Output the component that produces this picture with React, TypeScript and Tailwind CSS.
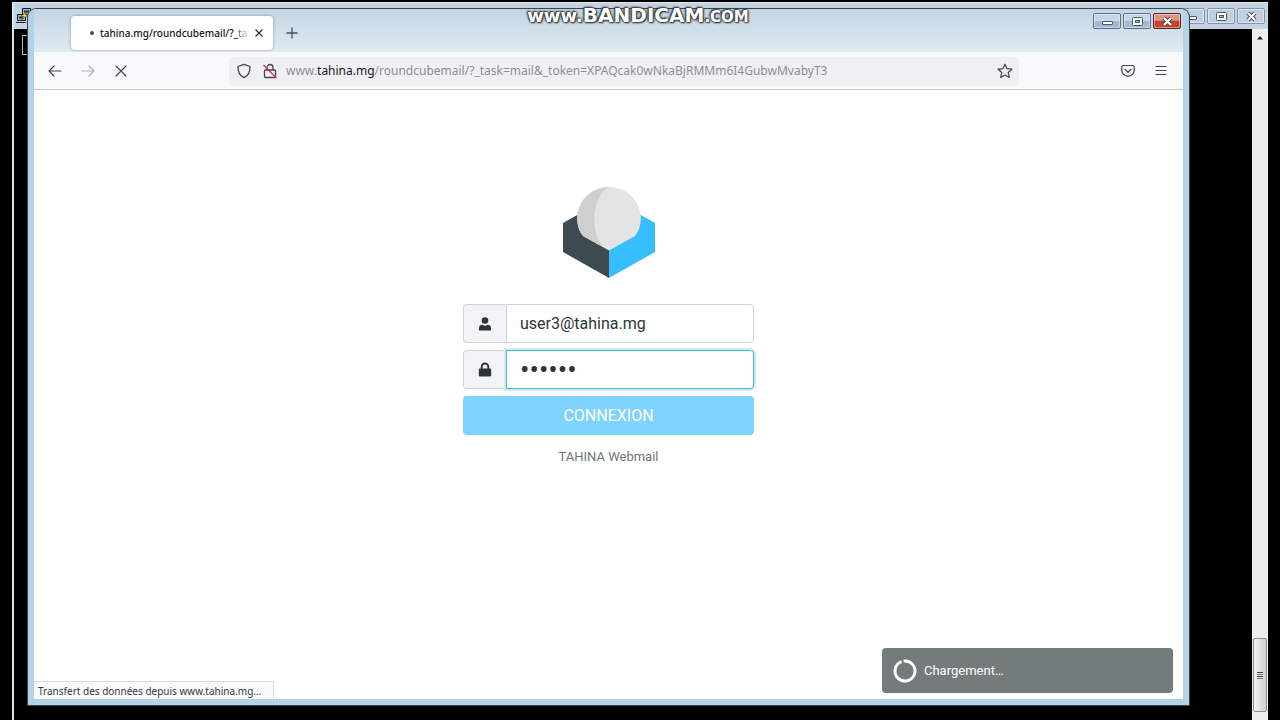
import { useState } from 'react';
import type { ReactNode } from 'react';

function CaptionGlyph({ kind }: { kind: 'min' | 'max' | 'close' }) {
  return (
    <svg width="13" height="11" viewBox="0 0 13 11" fill="none" aria-hidden="true">
      {kind === 'min' && <rect x="1.5" y="5.5" width="10" height="3" rx="0.5" fill="#fff" stroke="#4b5a6b" />}
      {kind === 'max' && (
        <>
          <rect x="1.5" y="1.5" width="10" height="8" rx="1" fill="#fff" stroke="#4b5a6b" />
          <rect x="4.5" y="4.5" width="4" height="2" fill="#9db4cc" stroke="#4b5a6b" />
        </>
      )}
      {kind === 'close' && (
        <>
          <path d="M3 2l7 7M10 2L3 9" stroke="#4b4650" strokeWidth="4" />
          <path d="M3 2l7 7M10 2L3 9" stroke="#fff" strokeWidth="2.2" />
        </>
      )}
    </svg>
  );
}

function CaptionButtons({ active }: { active: boolean }) {
  const base = 'flex h-4 w-7 items-center justify-center rounded-xs border shadow-[inset_0_0_0_1px_rgba(255,255,255,0.45)]';
  const plain = active
    ? 'border-[#596f88] bg-linear-to-b from-[#c5d7e9] from-50% to-[#a2bbd4] to-50%'
    : 'border-[#8095ad] bg-[#bfd0e3]';
  const close = active
    ? 'border-[#57202a] bg-linear-to-b from-[#dc9586] from-45% to-[#c5432b] to-50%'
    : plain;

  return (
    <div className="flex gap-0.5">
      <button type="button" aria-label="Réduire" className={`${base} ${plain}`}><CaptionGlyph kind="min" /></button>
      <button type="button" aria-label="Agrandir" className={`${base} ${plain}`}><CaptionGlyph kind="max" /></button>
      <button type="button" aria-label="Fermer" className={`${base} ${close}`}><CaptionGlyph kind="close" /></button>
    </div>
  );
}

function ToolButton({ label, className = '', children }: { label: string; className?: string; children: ReactNode }) {
  return (
    <button type="button" aria-label={label} className={`flex h-8 w-[33px] shrink-0 items-center justify-center text-[#45444f] ${className}`}>
      <svg width="16" height="16" viewBox="0 0 16 16" fill="none" stroke="currentColor" strokeWidth="1.2" strokeLinecap="round" strokeLinejoin="round">
        {children}
      </svg>
    </button>
  );
}

function Terminal() {
  return (
    <div className="absolute top-0.5 right-3 bottom-0 left-3 flex flex-col border-t border-l-2 border-[#dfe6ee]">
      <div className="flex h-[26px] shrink-0 items-center justify-between bg-[#c5d3e1] pr-[3px] pl-0.5">
        <svg width="16" height="16" viewBox="0 0 16 16" aria-hidden="true">
          <path d="M6.500 .5h8v6h-8zM1.500 6.500h8v6h-8z" fill="#a9b3c9" stroke="#161a2c" />
          <path d="M8 2.500h5v2H8zM3 8.500h5v2H3z" fill="#1c2d66" />
          <path d="M13 3L5 8l3 .5L4 13l8-6-3-.5z" fill="#f2e53a" stroke="#3b3a10" strokeWidth=".5" />
          <path d="M0 14.500h10M12 9.500h3" stroke="#161a2c" />
        </svg>
        <CaptionButtons active={false} />
      </div>
      <div className="flex min-h-0 grow bg-black">
        <div className="grow px-2 pt-1.5">
          <div className="h-5 w-2.5 border border-[#b8b5a4]" />
        </div>
        <div className="flex w-4 shrink-0 flex-col items-center justify-between bg-[#efeff0] pt-1.5 pb-2">
          <svg width="8" height="5" viewBox="0 0 8 5" aria-hidden="true"><path d="M1 4.500L4 1l3 3.500z" fill="#222" /></svg>
          <div className="flex h-[74px] w-3.5 flex-col items-center justify-center gap-px rounded-xs border border-[#8f9193] bg-linear-to-r from-[#f5f5f5] to-[#cfd0d2]">
            <div className="h-px w-1.5 bg-[#444]" />
            <div className="h-px w-1.5 bg-[#777]" />
            <div className="h-px w-1.5 bg-[#444]" />
            <div className="h-px w-1.5 bg-[#777]" />
          </div>
        </div>
      </div>
    </div>
  );
}

function TabStrip() {
  return (
    <div className="flex h-[43px] shrink-0 items-start justify-between bg-linear-to-b from-[#c3d4e2] to-[#deebf3]">
      <div className="flex pt-[7px] pl-[37px]">
        <div className="flex h-[34px] w-[202px] items-center rounded-sm bg-white pr-2 pl-[19px] shadow-[0_0_3px_rgba(70,90,110,0.55)]">
          <span className="size-1 shrink-0 rounded-full bg-[#4a4a55]" />
          <span className="ml-1.5 grow font-['Noto_Sans'] text-[10px] font-medium whitespace-nowrap text-[#15141a]">
            tahina.mg/roundcubemail/?_<span className="bg-linear-to-r from-[#77767d] to-[#dddddf] bg-clip-text text-transparent">ta</span>
          </span>
          <button type="button" aria-label="Fermer l'onglet" className="ml-1 shrink-0 p-0.5 text-[#2b2a33]">
            <svg width="10" height="10" viewBox="0 0 10 10" stroke="currentColor" strokeWidth="1.2"><path d="M1.500 1.500l7 7M8.500 1.500l-7 7" /></svg>
          </button>
        </div>
        <button type="button" aria-label="Nouvel onglet" className="ml-[11px] flex w-4 items-center justify-center text-[#45505a]">
          <svg width="12" height="12" viewBox="0 0 12 12" stroke="currentColor" strokeWidth="1.3"><path d="M6 .5v11M.5 6h11" /></svg>
        </button>
      </div>
      <div className="pt-1 pr-0.5">
        <CaptionButtons active />
      </div>
    </div>
  );
}

function Toolbar() {
  return (
    <div className="flex h-[38px] shrink-0 items-center border-b border-[#c9c9cf] bg-[#f9f9fb] pr-1.5 pl-1 pt-px">
      <ToolButton label="Page précédente">
        <path d="M14 8H2M7 3L2 8l5 5" />
      </ToolButton>
      <ToolButton label="Page suivante" className="opacity-40">
        <path d="M2 8h12M9 3l5 5-5 5" />
      </ToolButton>
      <ToolButton label="Arrêter">
        <path d="M3 3l10 10M13 3L3 13" />
      </ToolButton>
      <div className="mx-[92px] flex h-[29px] min-w-0 grow items-center rounded-sm bg-[#f0f0f4] pr-1.5 pl-[7px]">
        <svg width="16" height="16" viewBox="0 0 16 16" fill="none" stroke="#45444f" strokeWidth="1.3" strokeLinejoin="round" className="shrink-0" aria-hidden="true">
          <path d="M8 1.300L14 3.500c.2 5-1.500 9-6 11.200C3.500 12.500 1.800 8.500 2 3.500z" />
        </svg>
        <svg width="16" height="16" viewBox="0 0 16 16" fill="none" strokeWidth="1.3" className="ml-2.5 shrink-0" aria-hidden="true">
          <path d="M5 7V4.500a3 3 0 0 1 6 0V7M3.500 7h9a1 1 0 0 1 1 1v5.500a1 1 0 0 1-1 1h-9a1 1 0 0 1-1-1V8a1 1 0 0 1 1-1z" stroke="#45444f" />
          <path d="M1.500 2l13 13" stroke="#e22850" />
        </svg>
        <div className="ml-2 grow truncate font-['Noto_Sans'] text-[12px] text-[#8f8e96]">
          www.<span className="text-[#15141a]">tahina.mg</span>/roundcubemail/?_task=mail&amp;_token=XPAQcak0wNkaBjRMMm6I4GubwMvabyT3
        </div>
        <button type="button" aria-label="Marquer cette page" className="shrink-0">
          <svg width="16" height="16" viewBox="0 0 16 16" fill="none" stroke="#45444f" strokeWidth="1.2" strokeLinejoin="round">
            <path d="M8 1.200l2 4.500 4.900.5-3.700 3.300 1.100 4.900L8 11.900l-4.300 2.500 1.100-4.900L1.100 6.200 6 5.700z" />
          </svg>
        </button>
      </div>
      <ToolButton label="Pocket">
        <path d="M3 2.500h10a1.200 1.200 0 0 1 1.200 1.200V7A6.200 6.200 0 0 1 1.800 7V3.700A1.200 1.200 0 0 1 3 2.500zM5 6.300l3 2.900 3-2.900" />
      </ToolButton>
      <ToolButton label="Menu">
        <path d="M3 3.500h10M3 7.500h10M3 11.500h10" />
      </ToolButton>
    </div>
  );
}

function RoundcubeLogo() {
  return (
    <svg width="92" height="92" viewBox="0 0 92 92" role="img" aria-label="Roundcube">
      <path d="M0 36l16-9 30 35v29L0 65z" fill="#3d4a50" />
      <path d="M92 36l-16-9-30 35v29l46-26z" fill="#37beff" />
      <path d="M46 0a31.500 31.500 0 0 1 29 44.500L72 49 46 63.500 20 49l-3-4.500A31.500 31.500 0 0 1 46 0z" fill="#e4e4e4" />
      <path d="M46 0C27 10 27 52 43 61.800L20 49l-3-4.500A31.500 31.500 0 0 1 46 0z" fill="#cfcfcf" />
    </svg>
  );
}

function LoginForm() {
  const [user, setUser] = useState('user3@tahina.mg');
  const [password, setPassword] = useState('secret');

  return (
    <form className="flex w-[291px] flex-col gap-[7px] text-base" onSubmit={(e) => e.preventDefault()}>
      <div className="flex h-[39px]">
        <label htmlFor="user" aria-label="Nom d'utilisateur" className="flex w-[43px] shrink-0 items-center justify-center rounded-l border border-r-0 border-[#ced4da] bg-[#f1f3f4]">
          <svg width="14" height="16" viewBox="0 0 14 16" fill="#2c363a" aria-hidden="true">
            <circle cx="7" cy="4.500" r="3.300" />
            <path d="M1 14.500V12a3.500 3.500 0 0 1 3.500-3.200L7 10l2.500-1.200A3.500 3.500 0 0 1 13 12v2.500z" />
          </svg>
        </label>
        <input
          id="user"
          type="text"
          value={user}
          onChange={(e) => setUser(e.target.value)}
          className="min-w-0 grow rounded-r border border-[#ced4da] bg-white px-[13px] text-[#2c363a] outline-none"
        />
      </div>
      <div className="flex h-[39px]">
        <label htmlFor="password" aria-label="Mot de passe" className="flex w-[43px] shrink-0 items-center justify-center rounded-l border border-r-0 border-[#ced4da] bg-[#f1f3f4]">
          <svg width="14" height="16" viewBox="0 0 14 16" fill="#2c363a" aria-hidden="true">
            <path d="M2 6.500h10a1.200 1.200 0 0 1 1.200 1.200v5.600a1.200 1.200 0 0 1-1.200 1.200H2A1.200 1.200 0 0 1 .8 13.300V7.700A1.200 1.200 0 0 1 2 6.500z" />
            <path d="M3.700 7V4.800a3.300 3.300 0 0 1 6.600 0V7" fill="none" stroke="#2c363a" strokeWidth="1.900" />
          </svg>
        </label>
        <input
          id="password"
          type="password"
          value={password}
          onChange={(e) => setPassword(e.target.value)}
          className="min-w-0 grow rounded-r border border-[#52b5d0] bg-white px-[13px] text-[28px] text-[#2c363a] shadow-[0_0_0_2px_#c8ecf6] outline-none"
        />
      </div>
      <button type="submit" className="h-[39px] rounded bg-[#7fd3ff] text-white">CONNEXION</button>
    </form>
  );
}

function Browser() {
  return (
    <div className="absolute top-[9px] right-[91px] bottom-[15px] left-7 flex flex-col rounded-t-lg border-x-[6px] border-b-[6px] border-[#b4d1e5] bg-white shadow-[0_0_0_1px_#39444e]">
      <TabStrip />
      <Toolbar />
      <main className="relative flex grow flex-col items-center pt-[97px] font-[Roboto]">
        <RoundcubeLogo />
        <div className="pt-[25px]">
          <LoginForm />
        </div>
        <p className="mt-3 text-[13px] leading-5 text-[#6c757d]">TAHINA Webmail</p>

        <div role="status" className="absolute right-2.5 bottom-1.5 flex h-[45px] w-[291px] items-center gap-1.5 rounded bg-[#737b7b] px-2.5 text-[13px] text-white">
          <svg width="26" height="26" viewBox="0 0 26 26" fill="none" aria-hidden="true">
            <path d="M11 3.200A10 10 0 1 0 13 3" stroke="#fff" strokeWidth="3" transform="rotate(-8 13 13)" />
          </svg>
          Chargement…
        </div>
        <div className="absolute bottom-0 left-0 h-[18px] w-60 border-t border-r border-[#dcdcdf] bg-[#f9f9fb] px-1 font-['Noto_Sans'] text-[10px] leading-[18px] whitespace-nowrap text-[#38383d]">
          Transfert des données depuis www.tahina.mg…
        </div>
      </main>
    </div>
  );
}

function Watermark() {
  return (
    <div className="pointer-events-none absolute inset-x-0 top-0 flex h-[30px] items-center justify-center font-['DejaVu_Sans'] font-bold text-white text-shadow-[0_0_2px_#333,0_0_2px_#333,1px_1px_2px_#333,-1px_-1px_2px_#333]">
      <div className="flex items-baseline pr-1">
        <span className="text-[18px]">www.</span>
        <span className="text-[20px]">BANDICAM</span>
        <span className="text-[15px]">.COM</span>
      </div>
    </div>
  );
}

export default function App() {
  return (
    <div className="relative h-screen overflow-hidden bg-black">
      <Terminal />
      <Browser />
      <Watermark />
    </div>
  );
}
